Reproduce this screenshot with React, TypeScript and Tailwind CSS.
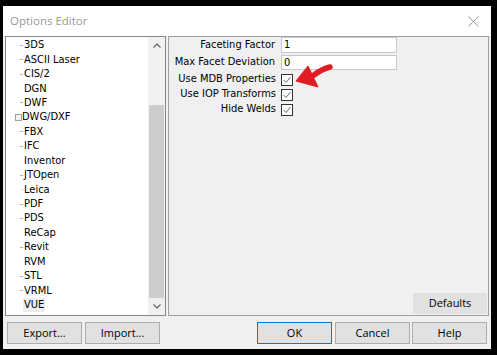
import React from "react";

type Item = { t: string; m: "dash" | "none" | "dot" | "box"; sel?: boolean };

const items: Item[] = [
  { t: "3DS", m: "dash" },
  { t: "ASCII Laser", m: "dash" },
  { t: "CIS/2", m: "dash" },
  { t: "DGN", m: "none" },
  { t: "DWF", m: "dash" },
  { t: "DWG/DXF", m: "box" },
  { t: "FBX", m: "dash" },
  { t: "IFC", m: "dash" },
  { t: "Inventor", m: "none" },
  { t: "JTOpen", m: "dash" },
  { t: "Leica", m: "dot" },
  { t: "PDF", m: "dash" },
  { t: "PDS", m: "dash" },
  { t: "ReCap", m: "none" },
  { t: "Revit", m: "dash" },
  { t: "RVM", m: "none" },
  { t: "STL", m: "dash" },
  { t: "VRML", m: "dash" },
  { t: "VUE", m: "none", sel: true },
];

const tahoma = { fontFamily: '"DejaVu Sans Condensed", "DejaVu Sans", "Liberation Sans", sans-serif' };
const segoe = { fontFamily: '"Open Sans", "Noto Sans", "Liberation Sans", sans-serif' };

function Check() {
  return (
    <div className="w-[12px] h-[12px] border border-[#333333] bg-white flex items-center justify-center">
      <svg width="10" height="10" viewBox="0 0 10 10">
        <path d="M1.5 5 L4 7.5 L8.5 2" fill="none" stroke="#6a6a6a" strokeWidth="1" />
      </svg>
    </div>
  );
}

function Btn({ label, primary, w = "w-[75px]" }: { label: string; primary?: boolean; w?: string }) {
  return (
    <div
      className={`${w} h-[22px] flex items-center justify-center bg-[#e1e1e1] border text-[11px] text-black ${
        primary ? "border-[#0078d7]" : "border-[#adadad]"
      }`}
      style={segoe}
    >
      {label}
    </div>
  );
}

export default function App() {
  return (
    <div className="w-[497px] h-[355px] bg-black pt-[6px] pl-[3px] overflow-hidden">
      <div className="relative w-[488px] h-[343px] bg-[#f0f0f0] flex flex-col">
        {/* Title bar */}
        <div className="h-[30px] bg-white flex items-center justify-between pl-[7px] pr-[12px]">
          <span className="text-[11.5px] text-[#999999]" style={segoe}>
            Options Editor
          </span>
          <svg width="11" height="11" viewBox="0 0 11 11">
            <path d="M0.5 0.5 L10.5 10.5 M10.5 0.5 L0.5 10.5" stroke="#999999" strokeWidth="1" />
          </svg>
        </div>

        {/* Main area */}
        <div className="flex pl-[2px] h-[280px]">
          {/* Tree */}
          <div className="w-[161px] h-full border border-[#828790] bg-white flex">
            <div className="flex-1 flex flex-col pt-[1px] text-[11px] text-black" style={tahoma}>
              {items.map((it) => (
                <div key={it.t} className="h-[14.44px] flex items-center">
                  {it.m === "dash" && (
                    <>
                      <span className="ml-[14px] w-[3px] h-px bg-[#b0b0b0]" />
                      <span className="w-[1px]" />
                    </>
                  )}
                  {it.m === "none" && <span className="w-[18px]" />}
                  {it.m === "dot" && (
                    <>
                      <span className="ml-[16px] w-[1px] h-px bg-[#b0b0b0]" />
                      <span className="w-[1px]" />
                    </>
                  )}
                  {it.m === "box" && (
                    <span className="ml-[9px] w-[7px] h-[7px] border border-[#a0a0a0] bg-[#f4f4f4]" />
                  )}
                  <span className={`leading-[14px] ${it.sel ? "bg-[#ececec] px-[1px] -ml-[1px]" : ""}`}>{it.t}</span>
                </div>
              ))}
            </div>
            {/* Scrollbar */}
            <div className="w-[17px] h-full bg-[#f0f0f0] flex flex-col">
              <div className="h-[17px] flex items-center justify-center">
                <svg width="8" height="5" viewBox="0 0 8 5">
                  <path d="M0.5 4.5 L4 1 L7.5 4.5" fill="none" stroke="#606060" strokeWidth="1.2" />
                </svg>
              </div>
              <div className="h-[51px]" />
              <div className="mx-[1px] flex-1 bg-[#cdcdcd]" />
              <div className="h-[17px] flex items-center justify-center">
                <svg width="8" height="5" viewBox="0 0 8 5">
                  <path d="M0.5 0.5 L4 4 L7.5 0.5" fill="none" stroke="#606060" strokeWidth="1.2" />
                </svg>
              </div>
            </div>
          </div>

          {/* Right panel */}
          <div className="ml-[2px] w-[321px] h-full border border-[#a0a0a0] bg-[#f0f0f0] flex flex-col text-[11px] text-black" style={tahoma}>
            <div className="flex items-center h-[16px]">
              <div className="w-[112px] pr-[6px] text-right">Faceting Factor</div>
              <div className="w-[116px] h-[16px] bg-white border border-[#c8c8c8] pl-[2px] leading-[14px]">1</div>
            </div>
            <div className="flex items-center h-[15px] mt-[2px]">
              <div className="w-[112px] pr-[6px] text-right">Max Facet Deviation</div>
              <div className="w-[116px] h-[15px] bg-white border border-[#c8c8c8] pl-[2px] leading-[13px]">0</div>
            </div>
            <div className="flex items-center h-[15px] mt-[2px]">
              <div className="w-[112px] pr-[5px] text-right">Use MDB Properties</div>
              <Check />
            </div>
            <div className="flex items-center h-[15px]">
              <div className="w-[112px] pr-[5px] text-right">Use IOP Transforms</div>
              <Check />
            </div>
            <div className="flex items-center h-[15px]">
              <div className="w-[112px] pr-[5px] text-right">Hide Welds</div>
              <Check />
            </div>
            <div className="flex-1" />
            <div className="flex justify-end pr-[1px] pb-[1px]">
              <div className="w-[74px] h-[21px] flex items-center justify-center bg-[#e1e1e1] text-[11px]" style={segoe}>
                Defaults
              </div>
            </div>
          </div>
        </div>

        {/* Bottom buttons */}
        <div className="flex items-center mt-[6px] pl-[4px] pr-[4px]">
          <Btn label="Export..." />
          <div className="w-[3px]" />
          <Btn label="Import..." />
          <div className="flex-1" />
          <Btn label="OK" primary />
          <div className="w-[3px]" />
          <Btn label="Cancel" />
          <div className="w-[2px]" />
          <Btn label="Help" />
        </div>

        {/* Red annotation arrow */}
        <svg className="absolute left-[285px] top-[54px]" width="50" height="36" viewBox="0 0 50 36">
          <path d="M42 7 Q 34 9 26 15" fill="none" stroke="#e11b22" strokeWidth="5.5" strokeLinecap="round" />
          <path d="M8 21 L20 6 L30 27 Z" fill="#e11b22" strokeLinejoin="round" stroke="#e11b22" strokeWidth="1" />
        </svg>
      </div>
    </div>
  );
}
